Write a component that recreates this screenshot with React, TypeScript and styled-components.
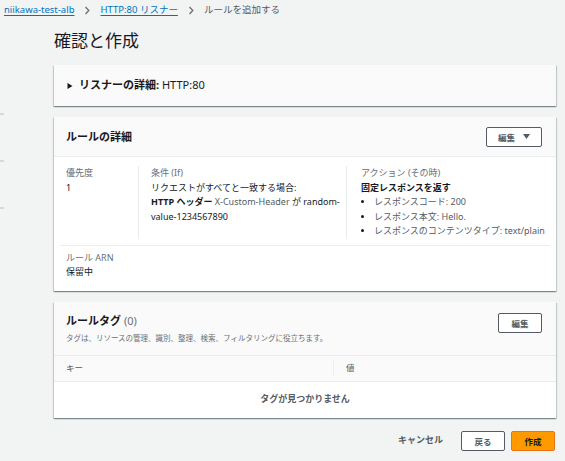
import React from "react"
import styled, { createGlobalStyle } from "styled-components"

const GlobalStyle = createGlobalStyle`
    html, body {
        margin: 0;
        padding: 0;
        background: #f2f3f3;
    }
    body {
        font-family: "Noto Sans", "Noto Sans CJK JP", sans-serif;
        color: #16191f;
        font-size: 9px;
        line-height: 14.5px;
    }
    * { box-sizing: border-box; }
`

const Page = styled.div`
    display: flex;
    width: 565px;
    min-height: 461px;
`

const Gutter = styled.div`
    width: 54px;
    flex: none;
    display: flex;
    flex-direction: column;
    padding-top: 113px;
    gap: 45px;

    span {
        display: block;
        width: 4px;
        height: 2px;
        background: #d5dbdb;
    }
`

const Main = styled.div`
    width: 502px;
    display: flex;
    flex-direction: column;
`

const Breadcrumbs = styled.nav`
    display: flex;
    align-items: center;
    height: 20px;
    margin-left: -50px;
    font-size: 9.5px;
    gap: 9px;
    color: #545b64;

    a {
        color: #0073bb;
        text-decoration: underline;
        text-underline-offset: 2px;
    }
`

const Chevron = () => (
    <svg width="8" height="9" viewBox="0 0 8 9">
        <path d="M2.5 1 L5.8 4.5 L2.5 8" fill="none" stroke="#687078" strokeWidth="1.3" />
    </svg>
)

const Heading = styled.h1`
    margin: 10px 0 13px;
    font-size: 17px;
    line-height: 22px;
    font-weight: 400;
    color: #16191f;
`

const Card = styled.section`
    background: #fff;
    box-shadow: 0 1px 1px 0 rgba(0, 28, 36, 0.3), 1px 1px 1px 0 rgba(0, 28, 36, 0.15), -1px 1px 1px 0 rgba(0, 28, 36, 0.15);
    margin-bottom: 11px;
`

const Expander = styled.div`
    height: 41px;
    display: flex;
    align-items: center;
    gap: 5px;
    padding-left: 12px;
    font-size: 11px;
    background: #fafafa;

    b { font-weight: 700; }
`

const CardHeader = styled.div<{ $tall?: boolean }>`
    background: #fafafa;
    border-bottom: 1px solid #eaeded;
    display: flex;
    justify-content: space-between;
    align-items: ${p => (p.$tall ? "flex-start" : "center")};
    padding: ${p => (p.$tall ? "11px 14px 0 12px" : "0 14px 0 12px")};
    height: ${p => (p.$tall ? "54px" : "40px")};
`

const CardTitle = styled.h2`
    margin: 0;
    font-size: 11px;
    line-height: 16px;
    font-weight: 700;

    span {
        font-weight: 400;
        color: #687078;
    }
`

const Description = styled.div`
    font-size: 7.5px;
    line-height: 12px;
    color: #687078;
    margin-top: 3px;
`

const Button = styled.button<{ $primary?: boolean; $w: number }>`
    width: ${p => p.$w}px;
    height: 20px;
    border-radius: 2px;
    border: 1px solid ${p => (p.$primary ? "#ec7211" : "#545b64")};
    background: ${p => (p.$primary ? "#ff9900" : "#fff")};
    color: ${p => (p.$primary ? "#16191f" : "#545b64")};
    font-family: inherit;
    font-size: 8.5px;
    font-weight: 700;
    padding: 0;
    display: inline-flex;
    align-items: center;
    justify-content: center;
    gap: 8px;
    flex: none;
`

const Columns = styled.div`
    display: grid;
    grid-template-columns: 72px 208px 1fr;
    padding: 9px 0 0 12px;
`

const Column = styled.div<{ $pad?: number }>`
    padding-left: ${p => p.$pad ?? 0}px;
    border-left: ${p => (p.$pad ? "1px solid #eaeded" : "none")};
    white-space: ${p => (p.$pad === 14 ? "nowrap" : "normal")};
`

const Label = styled.div`
    color: #687078;
`

const Strong = styled.span`
    font-weight: 700;
`

const Muted = styled.span`
    color: #545b64;
`

const Bullets = styled.ul`
    margin: 0;
    padding-left: 13px;
    color: #545b64;

    li::marker { color: #16191f; font-size: 8px; }
`

const Divider = styled.hr`
    border: 0;
    border-top: 1px solid #eaeded;
    margin: 6px 6px 5px;
`

const Arn = styled.div`
    padding: 0 0 11px 12px;
`

const TableHead = styled.div`
    display: grid;
    grid-template-columns: 279px 1fr;
    height: 26px;
    align-items: center;
    background: #fafafa;
    border-bottom: 1px solid #eaeded;
    font-size: 8.5px;
    color: #545b64;

    div { padding-left: 12px; }
    div + div { border-left: 1px solid #eaeded; padding-left: 12px; height: 14px; line-height: 14px; }
`

const Empty = styled.div`
    height: 36px;
    display: flex;
    align-items: center;
    justify-content: center;
    font-weight: 700;
    color: #545b64;
`

const Footer = styled.div`
    display: flex;
    justify-content: flex-end;
    align-items: center;
    gap: 6px;
    margin-top: 2px;
    margin-right: 1px;
`

const Cancel = styled.span`
    font-weight: 700;
    color: #545b64;
    font-size: 9px;
    margin-right: 12px;
`

export default function App() {
    return (
        <>
            <GlobalStyle />
            <Page>
                <Gutter>
                    <span />
                    <span />
                    <span />
                </Gutter>
                <Main>
                    <Breadcrumbs>
                        <a>niikawa-test-alb</a>
                        <Chevron />
                        <a>HTTP:80 リスナー</a>
                        <Chevron />
                        <span>ルールを追加する</span>
                    </Breadcrumbs>
                    <Heading>確認と作成</Heading>

                    <Card>
                        <Expander>
                            <svg width="8" height="8" viewBox="0 0 8 8">
                                <path d="M1.5 1 L6.5 4 L1.5 7 Z" fill="#16191f" />
                            </svg>
                            <span><b>リスナーの詳細:</b> HTTP:80</span>
                        </Expander>
                    </Card>

                    <Card>
                        <CardHeader>
                            <CardTitle>ルールの詳細</CardTitle>
                            <Button $w={56}>
                                編集
                                <svg width="7" height="5" viewBox="0 0 7 5">
                                    <path d="M0 0 L7 0 L3.5 5 Z" fill="#545b64" />
                                </svg>
                            </Button>
                        </CardHeader>
                        <Columns>
                            <Column>
                                <Label>優先度</Label>
                                <div>1</div>
                            </Column>
                            <Column $pad={12}>
                                <Label>条件 (If)</Label>
                                <div>リクエストがすべてと一致する場合:</div>
                                <div>
                                    <Strong>HTTP ヘッダー</Strong> <Muted>X-Custom-Header</Muted> が random-value-1234567890
                                </div>
                            </Column>
                            <Column $pad={14}>
                                <Label>アクション (その時)</Label>
                                <Strong>固定レスポンスを返す</Strong>
                                <Bullets>
                                    <li>レスポンスコード: 200</li>
                                    <li>レスポンス本文: Hello.</li>
                                    <li>レスポンスのコンテンツタイプ: text/plain</li>
                                </Bullets>
                            </Column>
                        </Columns>
                        <Divider />
                        <Arn>
                            <Label>ルール ARN</Label>
                            <div>保留中</div>
                        </Arn>
                    </Card>

                    <Card>
                        <CardHeader $tall>
                            <div>
                                <CardTitle>ルールタグ <span>(0)</span></CardTitle>
                                <Description>タグは、リソースの管理、識別、整理、検索、フィルタリングに役立ちます。</Description>
                            </div>
                            <Button $w={44}>編集</Button>
                        </CardHeader>
                        <TableHead>
                            <div>キー</div>
                            <div>値</div>
                        </TableHead>
                        <Empty>タグが見つかりません</Empty>
                    </Card>

                    <Footer>
                        <Cancel>キャンセル</Cancel>
                        <Button $w={44}>戻る</Button>
                        <Button $w={44} $primary>作成</Button>
                    </Footer>
                </Main>
            </Page>
        </>
    )
}
